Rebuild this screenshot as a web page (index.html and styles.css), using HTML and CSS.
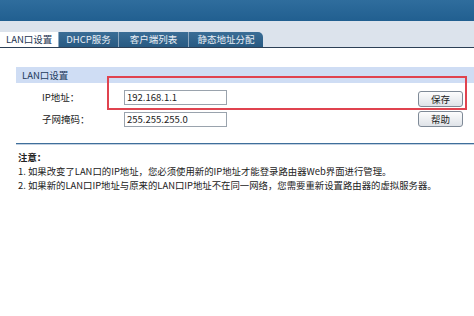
FILE: index.html
```html
<!DOCTYPE html>
<html lang="zh-CN">
<head>
<meta charset="UTF-8">
<title>LAN口设置</title>
<link rel="stylesheet" href="styles.css">
</head>
<body>
<div class="topbar"></div>
<div class="tabbar">
  <div class="tab active">LAN口设置</div>
  <div class="tab dhcp">DHCP服务</div>
  <div class="tab clients">客户端列表</div>
  <div class="tab last">静态地址分配</div>
</div>
<div class="content">
  <div class="section-title">LAN口设置</div>
  <div class="form">
    <label>IP地址：</label>
    <input type="text" class="field" value="192.168.1.1">
    <span></span>
    <button class="btn save">保存</button>
    <label>子网掩码：</label>
    <input type="text" class="field" value="255.255.255.0">
    <span></span>
    <button class="btn">帮助</button>
  </div>
  <div class="divider"></div>
  <div class="notes">
    <strong>注意：</strong>
    <p>1. 如果改变了LAN口的IP地址，您必须使用新的IP地址才能登录路由器Web界面进行管理。</p>
    <p>2. 如果新的LAN口IP地址与原来的LAN口IP地址不在同一网络，您需要重新设置路由器的虚拟服务器。</p>
  </div>
</div>
<div class="highlight"></div>
</body>
</html>
```
FILE: styles.css
```css
body { margin: 0; width: 474px; height: 316px; background: #fff; font-family: "Noto Sans CJK SC", "DejaVu Sans", sans-serif; font-size: 10px; color: #222; position: relative; overflow: hidden; }
.topbar { height: 21px; background: linear-gradient(to bottom, #2f6d9d, #215f90); }
.tabbar { display: flex; background: #dce3ec; padding-top: 11px; height: 15px; border-bottom: 1px solid #2c3f55; }
.tab { box-sizing: border-box; height: 15px; line-height: 15px; text-align: center; white-space: nowrap; background: linear-gradient(to bottom, #3a6d96, #285a82); color: #e8eef5; border-left: 1px solid #8fa8c0; font-size: 9.5px; }
.tab.active { width: 58px; background: #fff; color: #1d3552; border-left: none; text-align: left; padding-left: 6px; }
.tab.dhcp { width: 60px; }
.tab.clients { width: 70px; }
.tab.last { width: 75px; border-top-right-radius: 5px; }
.content { padding-left: 16px; }
.section-title { margin-top: 19px; height: 16px; line-height: 16px; background: #cfddf4; color: #233a5c; padding-left: 6px; font-size: 9.5px; }
.form { display: grid; grid-template-columns: 82px 103px 1fr 45px; grid-auto-rows: 16px; row-gap: 6px; align-items: center; padding: 6px 11px 0 26px; }
.form label { font-size: 9.5px; }
.field { box-sizing: border-box; width: 103px; height: 15px; border: 1px solid #9aa3ad; padding: 0 2px; font: 9.5px "Noto Sans CJK SC", sans-serif; color: #222; }
.btn { box-sizing: border-box; height: 16px; padding: 0; border: 1px solid #7f8a97; border-radius: 3px; background: linear-gradient(to bottom, #fdfdfd, #dfe3e8); font: 9.5px "Noto Sans CJK SC", sans-serif; color: #222; }
.btn.save { margin-top: 4px; }
.divider { margin-top: 16px; height: 1px; background: #3f6f9b; box-shadow: 0 1px 0 #c2d0e0; }
.notes { padding: 6px 0 0 2px; line-height: 14px; font-size: 9.4px; }
.notes strong { display: block; }
.notes p { margin: 0; white-space: nowrap; }
.highlight { position: absolute; left: 107px; top: 76px; width: 356px; height: 30px; border: 2px solid #e0434f; }
```
